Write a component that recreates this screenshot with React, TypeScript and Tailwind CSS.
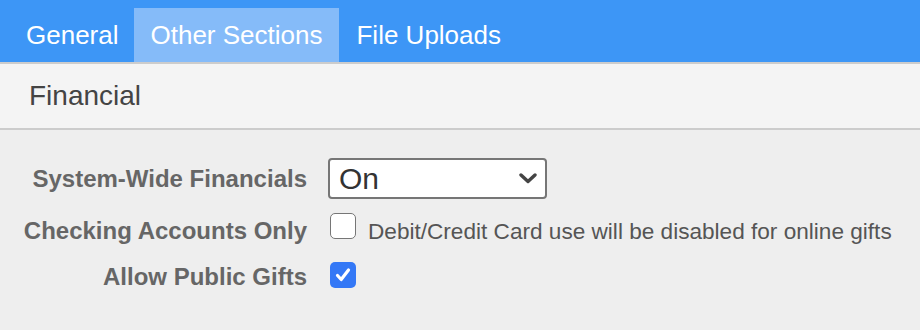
import React from "react"

const tabs = ["General", "Other Sections", "File Uploads"]

function Checkbox({ checked }: { checked?: boolean }) {
  if (checked) {
    return (
      <div className="w-[26px] h-[26px] rounded-[5px] bg-[#3478f6] flex items-center justify-center shrink-0">
        <svg width="18" height="18" viewBox="0 0 18 18" fill="none">
          <path d="M3.5 9.5 L7.2 13.5 L14.5 4" stroke="white" strokeWidth="3.2" strokeLinecap="round" strokeLinejoin="round" />
        </svg>
      </div>
    )
  }
  return <div className="w-[26px] h-[26px] rounded-[5px] border-[1.5px] border-[#767676] bg-white shrink-0" />
}

export default function App() {
  const active = "Other Sections"

  return (
    <div className="h-[330px] w-full flex flex-col bg-[#eeeeee] font-['Liberation_Sans',Arial,sans-serif]">
      {/* tabs */}
      <div className="h-[64px] bg-[#3d96f6] border-b-2 border-[#cccccc] flex items-end pl-[9px]">
        {tabs.map((t) => (
          <div
            key={t}
            className={
              "h-[54px] px-[17px] flex items-center text-[26px] text-white " +
              (t === active ? "bg-[#85bbf9] -ml-[2px]" : "")
            }
          >
            {t}
          </div>
        ))}
      </div>

      {/* section header */}
      <div className="h-[66px] bg-[#f4f4f4] border-b-2 border-[#cccccc] flex items-center px-[29px] text-[28px] text-[#444444]">
        Financial
      </div>

      {/* form */}
      <div className="flex-1 flex flex-col pt-[28px]">
        <div className="flex items-center h-[41px]">
          <div className="w-[307px] text-right text-[24px] font-bold text-[#666666] leading-[26px]">
            System-Wide Financials
          </div>
          <div className="ml-[21px] w-[219px] h-[41px] bg-white border-2 border-[#767676] rounded-[4px] flex items-center justify-between pl-[9px] pr-[8px]">
            <span className="text-[30px] text-[#333333] leading-none">On</span>
            <svg width="18" height="11" viewBox="0 0 18 11" fill="none">
              <path d="M2 2 L9 8.5 L16 2" stroke="#444444" strokeWidth="3.4" strokeLinecap="round" strokeLinejoin="round" />
            </svg>
          </div>
        </div>

        <div className="flex items-center h-[26px] mt-[17px]">
          <div className="w-[307px] text-right text-[24px] font-bold text-[#666666] leading-[26px] mt-[3px]">
            Checking Accounts Only
          </div>
          <div className="ml-[23px] flex items-start">
            <Checkbox />
            <span className="ml-[12px] mt-[6px] text-[22.6px] leading-[26px] text-[#555555] whitespace-nowrap">
              Debit/Credit Card use will be disabled for online gifts
            </span>
          </div>
        </div>

        <div className="flex items-center h-[26px] mt-[20px]">
          <div className="w-[307px] text-right text-[24px] font-bold text-[#666666] leading-[26px] mt-[3px]">
            Allow Public Gifts
          </div>
          <div className="ml-[23px]">
            <Checkbox checked />
          </div>
        </div>
      </div>
    </div>
  )
}
